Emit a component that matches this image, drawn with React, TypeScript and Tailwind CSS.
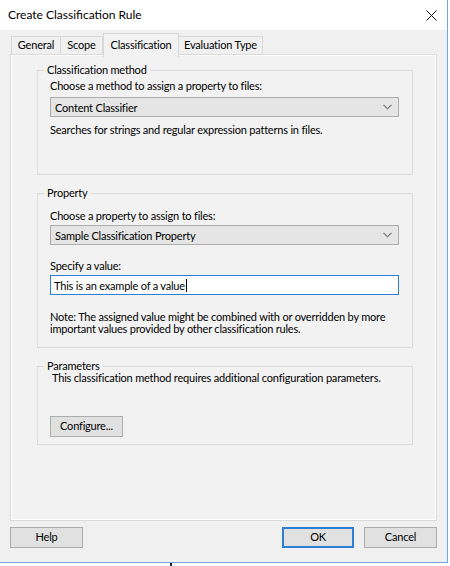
import React from "react";

const font = { fontFamily: 'Lato, "Noto Sans", sans-serif', letterSpacing: "-0.2px" };

function Chevron() {
  return (
    <svg width="9" height="6" viewBox="0 0 9 6" className="shrink-0">
      <path d="M0.5 0.8 L4.5 4.8 L8.5 0.8" fill="none" stroke="#707070" strokeWidth="1.1" />
    </svg>
  );
}

function Dropdown({ text }: { text: string }) {
  return (
    <div className="w-[349px] h-[20px] border border-[#adadad] bg-[#e5e5e5] flex items-center justify-between pl-[4px] pr-[6px]">
      <span className="leading-[13px]">{text}</span>
      <Chevron />
    </div>
  );
}

function Group({ title, className, children }: { title: string; className: string; children: React.ReactNode }) {
  return (
    <div className={"relative w-[376px] border border-[#dcdcdc] pl-[12px] " + className}>
      <span className="absolute -top-[7px] left-[6px] px-[3px] bg-[#f2f2f2] leading-[12px]">{title}</span>
      {children}
    </div>
  );
}

function Btn({ children, primary }: { children: React.ReactNode; primary?: boolean }) {
  return (
    <div
      className={
        "h-[21px] flex items-center justify-center bg-[#e1e1e1] " +
        (primary ? "w-[72px] border-2 border-[#2c7fd3]" : "w-[73px] border border-[#adadad]")
      }
    >
      {children}
    </div>
  );
}

export default function App() {
  return (
    <div className="w-[450px] h-[566px] bg-white relative overflow-hidden text-[11px] text-black" style={font}>
      <div className="w-[448px] h-[563px] border-r border-b border-[#6fa8dc] flex flex-col">
        <div className="h-[30px] bg-white flex items-center justify-between pl-[8px] pr-[10px] shrink-0">
          <span className="text-[12px] tracking-[0px]">Create Classification Rule</span>
          <svg width="11" height="11" viewBox="0 0 11 11">
            <path d="M0.5 0.5 L10.5 10.5 M10.5 0.5 L0.5 10.5" stroke="#111" strokeWidth="1" />
          </svg>
        </div>
        <div className="flex-1 bg-[#f0f0f0] px-[10px] flex flex-col">
          <div className="h-[24px] mt-[3px] flex items-end pl-[1px] relative z-10">
            <div className="w-[49px] h-[18px] mb-[3px] border border-r-0 border-b-0 border-[#d9d9d9] flex items-center justify-center">General</div>
            <div className="w-[43px] h-[18px] mb-[3px] border border-b-0 border-[#d9d9d9] flex items-center justify-center">Scope</div>
            <div className="w-[76px] h-[24px] border border-b-0 border-[#d9d9d9] bg-[#f2f2f2] flex items-start justify-center pt-[3px]">Classification</div>
            <div className="w-[84px] h-[18px] mb-[3px] border border-l-0 border-b-0 border-[#d9d9d9] flex items-center justify-center">Evaluation Type</div>
          </div>
          <div className="h-[467px] w-[427px] -mt-[3px] border border-[#d9d9d9] bg-[#f2f2f2] shadow-[inset_1px_1px_0_#ffffff,inset_-1px_-1px_0_#ffffff] pl-[26px] pt-[15px] flex flex-col">
            <Group title="Classification method" className="h-[105px] pt-[8px]">
              <div className="leading-[13px]">Choose a method to assign a property to files:</div>
              <div className="mt-[5px]">
                <Dropdown text="Content Classifier" />
              </div>
              <div className="leading-[13px] mt-[6px]">Searches for strings and regular expression patterns in files.</div>
            </Group>
            <Group title="Property" className="h-[155px] mt-[18px] pt-[15px]">
              <div className="leading-[13px]">Choose a property to assign to files:</div>
              <div className="mt-[3px]">
                <Dropdown text="Sample Classification Property" />
              </div>
              <div className="leading-[13px] mt-[14px]">Specify a value:</div>
              <div className="mt-[3px] w-[349px] h-[20px] border border-[#2c7fd3] bg-white flex items-center pl-[3px]">
                <span className="leading-[13px]">This is an example of a value</span>
                <span className="w-px h-[13px] bg-black ml-px" />
              </div>
              <div className="mt-[16px] leading-[12px] whitespace-nowrap">
                Note: The assigned value might be combined with or overridden by more
                <br />
                important values provided by other classification rules.
              </div>
            </Group>
            <Group title="Parameters" className="h-[79px] mt-[18px] pt-[5px]">
              <div className="relative z-10 leading-[11px] pl-[2px] whitespace-nowrap">This classification method requires additional configuration parameters.</div>
              <div className="mt-[33px] w-[73px] h-[21px] border border-[#adadad] bg-[#e1e1e1] flex items-center justify-center">
                Configure...
              </div>
            </Group>
          </div>
          <div className="mt-[6px] flex items-center">
            <Btn>Help</Btn>
            <div className="flex-1" />
            <Btn primary>OK</Btn>
            <div className="w-[10px]" />
            <Btn>Cancel</Btn>
          </div>
        </div>
      </div>
      <div className="absolute left-[170px] top-[563px] w-[2px] h-[3px] bg-[#222]" />
    </div>
  );
}
